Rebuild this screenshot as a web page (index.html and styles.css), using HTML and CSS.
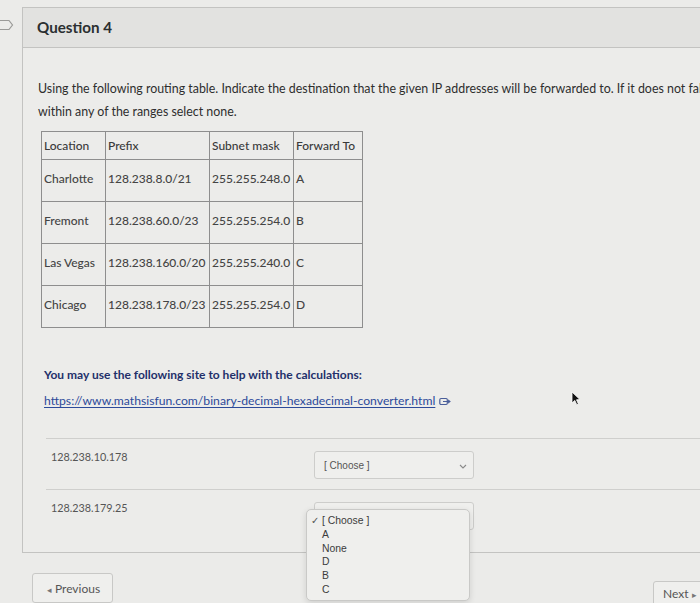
FILE: index.html
```html
<!DOCTYPE html>
<html lang="en">
<head>
<meta charset="utf-8">
<title>Question 4</title>
<link rel="stylesheet" href="styles.css">
</head>
<body>
<div class="page">
  <svg class="flag" width="14" height="12" viewBox="0 0 14 12"><path d="M-2 1.5 H9 L12.5 6 L9 10.5 H-2" fill="none" stroke="#9a9a98" stroke-width="1.2"/></svg>
  <section class="card">
    <header class="card-head"><h2 class="title">Question 4</h2></header>
    <div class="card-body">
      <p class="intro">Using the following routing table. Indicate the destination that the given IP addresses will be forwarded to. If it does not fall within any of the ranges select none.</p>
      <table class="routes">
        <thead>
          <tr><th class="c1">Location</th><th class="c2">Prefix</th><th class="c3">Subnet mask</th><th class="c4">Forward To</th></tr>
        </thead>
        <tbody>
          <tr><td>Charlotte</td><td>128.238.8.0/21</td><td>255.255.248.0</td><td>A</td></tr>
          <tr><td>Fremont</td><td>128.238.60.0/23</td><td>255.255.254.0</td><td>B</td></tr>
          <tr><td>Las Vegas</td><td>128.238.160.0/20</td><td>255.255.240.0</td><td>C</td></tr>
          <tr><td>Chicago</td><td>128.238.178.0/23</td><td>255.255.254.0</td><td>D</td></tr>
        </tbody>
      </table>
      <p class="hint">You may use the following site to help with the calculations:</p>
      <p class="linkline"><a class="ext" href="#">https://www.mathsisfun.com/binary-decimal-hexadecimal-converter.html</a><svg class="ext-icon" width="12" height="9" viewBox="0 0 12 9"><rect x="0.8" y="1.5" width="7.5" height="6" rx="1.2" fill="none" stroke="#4a5e9a" stroke-width="1.2"/><path d="M4 4.5 H11 M9 2.8 L11 4.5 L9 6.2" fill="none" stroke="#4a5e9a" stroke-width="1.1"/></svg></p>
      <div class="answers">
        <div class="answer-row">
          <span class="ip">128.238.10.178</span>
          <div class="select-wrap">
            <div class="select"><span>[ Choose ]</span><svg class="chev" width="8" height="5" viewBox="0 0 8 5"><path d="M1 1 L4 4 L7 1" fill="none" stroke="#8a8a8a" stroke-width="1.1"/></svg></div>
          </div>
        </div>
        <div class="answer-row">
          <span class="ip">128.238.179.25</span>
          <div class="select-wrap">
            <div class="select"><span>[ Choose ]</span><svg class="chev" width="8" height="5" viewBox="0 0 8 5"><path d="M1 1 L4 4 L7 1" fill="none" stroke="#8a8a8a" stroke-width="1.1"/></svg></div>
            <ul class="menu">
              <li class="checked"><span class="tick">✓</span>[ Choose ]</li>
              <li>A</li>
              <li>None</li>
              <li>D</li>
              <li>B</li>
              <li>C</li>
            </ul>
          </div>
        </div>
      </div>
    </div>
  </section>
  <nav class="pager">
    <button class="btn prev"><span class="tri">◂</span> Previous</button>
    <button class="btn next">Next <span class="tri">▸</span></button>
  </nav>
  <svg class="cursor" width="10" height="15" viewBox="0 0 10 15"><path d="M1 1 L1 12 L3.8 9.4 L5.8 13.8 L7.4 13 L5.5 8.8 L9 8.6 Z" fill="#111" stroke="#fff" stroke-width="0.8"/></svg>
</div>
</body>
</html>
```
FILE: styles.css
```css
* { box-sizing: border-box; }
html, body {
  margin: 0;
  padding: 0;
  background: #ebebe9;
  overflow: hidden;
}
body {
  width: 700px;
  height: 603px;
  font-family: Lato, "Open Sans", sans-serif;
  color: #2f3436;
}
.page {
  position: relative;
  padding: 7px 0 0 22px;
  width: 820px;
}
.flag {
  position: absolute;
  left: 0;
  top: 19px;
}
.card {
  width: 790px;
  border: 1px solid #c3c3c1;
  background: #ececea;
}
.card-head {
  height: 40px;
  background: #e2e2e0;
  border-bottom: 1px solid #c3c3c1;
  display: flex;
  align-items: center;
  padding-left: 14px;
  padding-bottom: 2px;
}
.title {
  margin: 0;
  font-size: 15.2px;
  font-weight: 700;
  color: #2b2f31;
}
.card-body {
  padding: 29px 0 12px 15px;
}
.intro {
  margin: 0;
  font-size: 12.4px;
  line-height: 23px;
  color: #2e2e2e;
  width: 680px;
}
.routes {
  margin: 8px 0 0 3px;
  border-collapse: collapse;
  border: 1.5px solid #7d7d7d;
  font-size: 12px;
  color: #444;
}
.routes th, .routes td {
  border: 1px solid #8e8e8e;
  padding: 0 2px;
  text-align: left;
  font-weight: 500;
  white-space: nowrap;
}
.routes th {
  height: 28px;
  vertical-align: middle;
  color: #3a3a3a;
}
.routes td {
  height: 42px;
  vertical-align: middle;
  padding-bottom: 4px;
}
.c1 { width: 64px; }
.c2 { width: 104px; }
.c3 { width: 84px; }
.c4 { width: 69px; }
.hint {
  margin: 37px 0 0 6px;
  font-size: 12px;
  font-weight: 700;
  line-height: 20px;
  color: #23306a;
}
.linkline {
  margin: 6px 0 0 6px;
  line-height: 20px;
  font-size: 12.2px;
  display: flex;
  align-items: center;
  gap: 4px;
}
.ext {
  color: #2c4a9a;
  text-decoration: underline;
  text-decoration-thickness: 1px;
  text-underline-offset: 2px;
}
.answers {
  margin: 27px 0 0 8px;
}
.answer-row {
  border-top: 1px solid #cfcfcd;
  height: 51px;
  display: flex;
  align-items: flex-start;
  padding: 10px 0 0 5px;
}
.ip {
  font-size: 10.8px;
  line-height: 16px;
  color: #555;
  width: 263px;
}
.select-wrap {
  position: relative;
  margin-top: 2px;
}
.select {
  width: 160px;
  height: 28px;
  border: 1px solid #cdcdcb;
  border-radius: 3px;
  background: #efefed;
  display: flex;
  align-items: center;
  justify-content: space-between;
  padding: 0 6px 0 9px;
  font-family: "Liberation Sans", Arial, sans-serif;
  font-size: 10px;
  color: #555;
}
.chev { margin-top: 2px; }
.menu {
  position: absolute;
  left: -8px;
  top: 7px;
  width: 164px;
  height: 92px;
  margin: 0;
  padding: 4px 0 0 15px;
  list-style: none;
  background: #efefed;
  border: 1px solid #c9c9c7;
  border-radius: 5px;
  box-shadow: 0 2px 6px rgba(0,0,0,0.12);
  font-family: "Liberation Sans", Arial, sans-serif;
  font-size: 10.4px;
  line-height: 13.8px;
  color: #3c3c3c;
}
.menu li { position: relative; }
.tick {
  position: absolute;
  left: -11px;
  color: #555;
}
.pager {
  display: flex;
  justify-content: space-between;
  align-items: flex-start;
  margin: 20px 0 0 10px;
  width: 681px;
}
.btn {
  font-family: Lato, "Open Sans", sans-serif;
  font-size: 12px;
  color: #555;
  background: #efefed;
  border: 1px solid #c8c8c6;
  border-radius: 3px;
  height: 30px;
  padding: 0 10px 0 12px;
}
.prev { width: 81px; }
.next { margin-top: 8px; width: 60px; padding: 0 0 6px 9px; text-align: left; }
.tri { font-size: 9px; color: #777; }
.cursor {
  position: absolute;
  left: 571px;
  top: 391px;
}
```
